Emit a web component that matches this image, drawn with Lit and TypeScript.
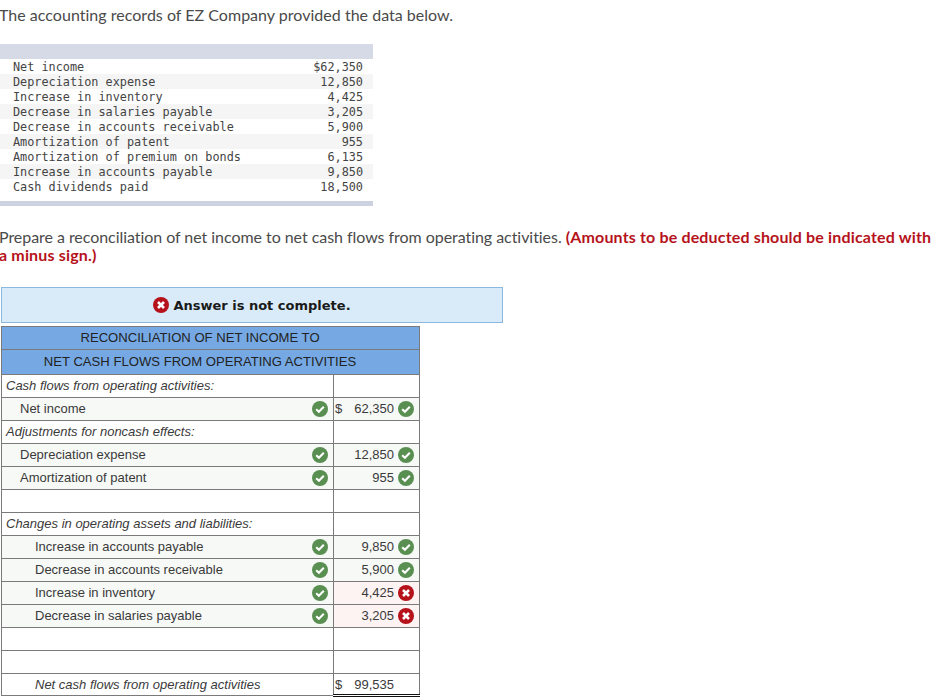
import { LitElement, html, css, svg } from "lit";
import { customElement } from "lit/decorators.js";

const data: [string, string][] = [
  ["Net income", "$62,350"],
  ["Depreciation expense", "12,850"],
  ["Increase in inventory", "4,425"],
  ["Decrease in salaries payable", "3,205"],
  ["Decrease in accounts receivable", "5,900"],
  ["Amortization of patent", "955"],
  ["Amortization of premium on bonds", "6,135"],
  ["Increase in accounts payable", "9,850"],
  ["Cash dividends paid", "18,500"],
];

type Row = {
  label?: string;
  kind?: "head" | "l1" | "l2" | "total";
  mark?: boolean;
  dollar?: boolean;
  value?: string;
  vmark?: "ok" | "bad";
};

const rows: Row[] = [
  { label: "Cash flows from operating activities:", kind: "head" },
  { label: "Net income", kind: "l1", mark: true, dollar: true, value: "62,350", vmark: "ok" },
  { label: "Adjustments for noncash effects:", kind: "head" },
  { label: "Depreciation expense", kind: "l1", mark: true, value: "12,850", vmark: "ok" },
  { label: "Amortization of patent", kind: "l1", mark: true, value: "955", vmark: "ok" },
  {},
  { label: "Changes in operating assets and liabilities:", kind: "head" },
  { label: "Increase in accounts payable", kind: "l2", mark: true, value: "9,850", vmark: "ok" },
  { label: "Decrease in accounts receivable", kind: "l2", mark: true, value: "5,900", vmark: "ok" },
  { label: "Increase in inventory", kind: "l2", mark: true, value: "4,425", vmark: "bad" },
  { label: "Decrease in salaries payable", kind: "l2", mark: true, value: "3,205", vmark: "bad" },
  {},
  {},
  { label: "Net cash flows from operating activities", kind: "total", dollar: true, value: "99,535" },
];

const okIcon = html`<svg class="ic" viewBox="0 0 16 16"><circle cx="8" cy="8" r="8" fill="#5a8f52"/>${svg`<path d="M4.2 8.3 L6.9 10.8 L11.8 5.8" fill="none" stroke="#fff" stroke-width="2.1"/>`}</svg>`;
const badIcon = html`<svg class="ic" viewBox="0 0 16 16"><circle cx="8" cy="8" r="8" fill="#b5121b"/>${svg`<path d="M5 5 L11 11 M11 5 L5 11" fill="none" stroke="#fff" stroke-width="2.6"/>`}</svg>`;

@customElement("app-root")
export class AppRoot extends LitElement {
  static styles = css`
    :host {
      display: block;
      width: 939px;
      height: 700px;
      overflow: hidden;
      background: #fff;
      font-family: "Lato", "Open Sans", sans-serif;
      color: #4a4a4a;
    }
    p { margin: 0; }
    .intro {
      font-size: 16px;
      line-height: 18px;
      padding-top: 6px;
      margin-left: -1px;
      letter-spacing: 0.02px;
    }
    .data {
      width: 373px;
      margin-top: 20px;
      background: #fff;
      font-family: "DejaVu Sans Mono", monospace;
      font-size: 11.83px;
      color: #444;
    }
    .data-cap { height: 15px; background: #d5dae6; }
    .data-row {
      box-sizing: border-box;
      display: flex;
      justify-content: space-between;
      height: 15px;
      line-height: 15px;
      padding: 1px 10px 0 13px;
    }
    .data-row:nth-child(even) { background: #f5f5f5; }
    .data-foot { height: 5px; margin-top: 7px; background: #ccd2e0; }
    .prompt {
      width: 935px;
      margin: 22px 0 0 -1px;
      font-size: 16px;
      line-height: 18px;
      letter-spacing: -0.05px;
    }
    .prompt b { color: #b5121b; font-weight: 700; letter-spacing: 0.16px; }
    .banner {
      box-sizing: border-box;
      display: flex;
      align-items: center;
      justify-content: center;
      gap: 4px;
      width: 502px;
      height: 36px;
      margin: 23px 0 0 1px;
      background: #d9ebf9;
      border: 1px solid #8cb8e0;
      font-family: "DejaVu Sans", sans-serif;
      font-weight: 700;
      font-size: 13px;
      color: #1a1a1a;
    }
    .ic { width: 16px; height: 16px; flex: none; display: block; }
    table {
      border-collapse: collapse;
      table-layout: fixed;
      width: 418px;
      margin: 3px 0 0 1px;
      font-family: "Liberation Sans", Arial, sans-serif;
      font-size: 13px;
      color: #3a3a3a;
    }
    th, td { border: 1px solid #7a7a7a; padding: 0; height: 22px; }
    th {
      box-sizing: border-box;
      background: #76a9e4;
      font-weight: 400;
      font-size: 13.1px;
      color: #222;
      height: 23px;
      padding: 0 21px 2px 0;
    }
    tr.second th { height: 25px; }
    td.label { padding-left: 3px; }
    td.head, td.total { font-style: italic; }
    td.head { padding-left: 4px; }
    td.l1 { padding-left: 18px; }
    td.l2, td.total { padding-left: 33px; }
    tr.fill td { background: #f7f9f6; }
    tr.fill td.bad { background: #fdf3f2; }
    .label-in { display: flex; align-items: center; justify-content: space-between; padding-right: 5px; }
    .val { display: flex; align-items: center; gap: 4px; padding: 0 5px 0 1px; }
    .label-in span, .val span { margin-bottom: 2px; }
    td.total .label-in span, td.sum .val span { margin-bottom: 0; }
    .val .num { flex: 1; text-align: right; }
    .val .num.pad { margin-right: 20px; }
    td.sum { border-top: 1px solid #111; border-bottom: 3px double #111; height: 20px; }
    td.total { height: 20px; }
  `;

  render() {
    return html`
      <p class="intro">The accounting records of EZ Company provided the data below.</p>
      <div class="data">
        <div class="data-cap"></div>
        <div>
          ${data.map(([a, b]) => html`<div class="data-row"><span>${a}</span><span>${b}</span></div>`)}
        </div>
        <div class="data-foot"></div>
      </div>
      <p class="prompt">Prepare a reconciliation of net income to net cash flows from operating activities. <b>(Amounts to be deducted should be indicated with a minus sign.)</b></p>
      <div class="banner">${badIcon}<span>Answer is not complete.</span></div>
      <table>
        <colgroup><col style="width:332px" /><col style="width:86px" /></colgroup>
        <thead>
          <tr><th colspan="2">RECONCILIATION OF NET INCOME TO</th></tr>
          <tr class="second"><th colspan="2">NET CASH FLOWS FROM OPERATING ACTIVITIES</th></tr>
        </thead>
        <tbody>
          ${rows.map((r) => html`
            <tr class=${r.kind === "l1" || r.kind === "l2" ? "fill" : ""}>
              <td class="label ${r.kind ?? ""}">
                <div class="label-in"><span>${r.label ?? ""}</span>${r.mark ? okIcon : ""}</div>
              </td>
              <td class="${r.vmark === "bad" ? "bad" : ""} ${r.kind === "total" ? "sum" : ""}">
                ${r.value
                  ? html`<div class="val"><span>${r.dollar ? "$" : ""}</span><span class="num ${r.vmark ? "" : "pad"}">${r.value}</span>${r.vmark === "ok" ? okIcon : r.vmark === "bad" ? badIcon : ""}</div>`
                  : ""}
              </td>
            </tr>`)}
        </tbody>
      </table>
    `;
  }
}
